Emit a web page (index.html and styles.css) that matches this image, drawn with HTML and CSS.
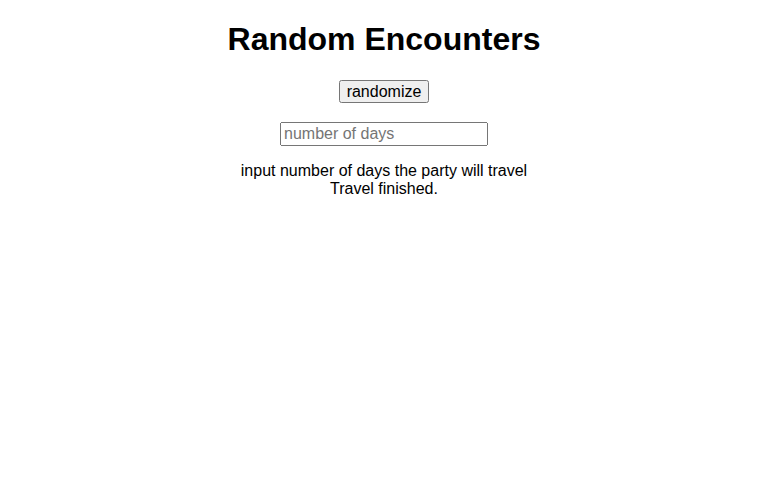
FILE: index.html
```html
<html lang="en">
<head>
  <meta charset="UTF-8">
  <meta name="viewport" content="width=device-width, initial-scale=1.0">
  <title>Random Encounters</title>
  <link rel="stylesheet" href="styles.css">
</head>
<body>
  <h1>Random Encounters</h1>
  <button id="randomize">randomize</button>
  <div class="days">
    <input type="text" id="days" placeholder="number of days">
  </div>
  <div id="output">
    <p>input number of days the party will travel</p>
    <p>Travel finished.</p>
  </div>
</body>
</html>
```
FILE: styles.css
```css
body {
  font-family: "Liberation Sans", Arial, sans-serif;
  text-align: center;
  margin: 8px;
  color: #000;
  background: #fff;
}
h1 {
  font-size: 32px;
  margin: 13px 0 22px;
}
button {
  font-family: "Liberation Sans", Arial, sans-serif;
  font-size: 16px;
  height: 23px;
  padding: 1px 6px;
}
.days {
  margin-top: 19px;
}
input {
  font-family: "Liberation Sans", Arial, sans-serif;
  font-size: 16px;
  width: 208px;
  height: 24px;
  box-sizing: border-box;
  padding: 1px 2px;
}
#output {
  margin-top: 16px;
}
#output p {
  margin: 0;
  font-size: 16px;
}
```
